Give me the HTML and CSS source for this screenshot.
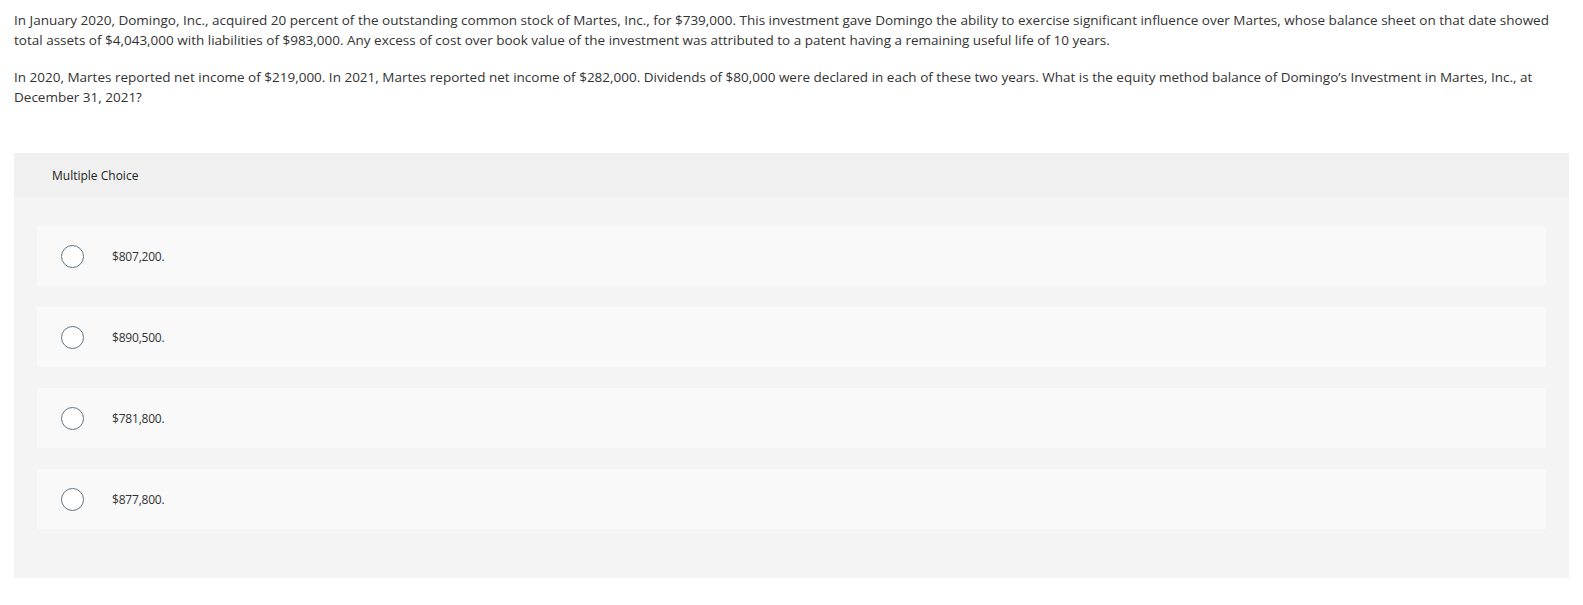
FILE: index.html
```html
<!DOCTYPE html>
<html>
<head>
<meta charset="utf-8">
<link rel="stylesheet" href="styles.css">
</head>
<body>
<div class="page">
  <div class="question">
    <p>In January 2020, Domingo, Inc., acquired 20 percent of the outstanding common stock of Martes, Inc., for $739,000. This investment gave Domingo the ability to exercise significant influence over Martes, whose balance sheet on that date showed total assets of $4,043,000 with liabilities of $983,000. Any excess of cost over book value of the investment was attributed to a patent having a remaining useful life of 10 years.</p>
    <p>In 2020, Martes reported net income of $219,000. In 2021, Martes reported net income of $282,000. Dividends of $80,000 were declared in each of these two years. What is the equity method balance of Domingo’s Investment in Martes, Inc., at December 31, 2021?</p>
  </div>
  <div class="mc">
    <div class="mc-header">Multiple Choice</div>
    <div class="mc-body">
      <div class="option"><span class="radio"></span><span class="label">$807,200.</span></div>
      <div class="option"><span class="radio"></span><span class="label">$890,500.</span></div>
      <div class="option"><span class="radio"></span><span class="label">$781,800.</span></div>
      <div class="option"><span class="radio"></span><span class="label">$877,800.</span></div>
    </div>
  </div>
</div>
</body>
</html>
```
FILE: styles.css
```css
html, body {
  margin: 0;
  padding: 0;
  background: #ffffff;
}
body {
  font-family: "Open Sans", "Liberation Sans", sans-serif;
  color: #333333;
}
.page {
  padding: 10px 14px 0 14px;
}
.question p {
  margin: 0 0 17px 0;
  font-size: 13.5px;
  line-height: 20px;
}
.question {
  margin-bottom: 46px;
}
.question p:last-child {
  margin-bottom: 0;
}
.mc {
  background: #f4f4f4;
}
.mc-header {
  background: #f0f0f0;
  height: 44px;
  display: flex;
  align-items: center;
  padding-left: 38px;
  font-size: 12px;
  color: #222;
}
.mc-body {
  padding: 29px 23px 49px 23px;
  display: flex;
  flex-direction: column;
  gap: 21px;
}
.option {
  background: #f9f9f9;
  height: 60px;
  display: flex;
  align-items: center;
  padding-left: 24px;
}
.radio {
  width: 21px;
  height: 21px;
  border: 1.5px solid #5d7384;
  border-radius: 50%;
  background: #ffffff;
  flex: none;
}
.label {
  margin-left: 28px;
  font-size: 12px;
  letter-spacing: -0.2px;
  color: #333;
}
```
